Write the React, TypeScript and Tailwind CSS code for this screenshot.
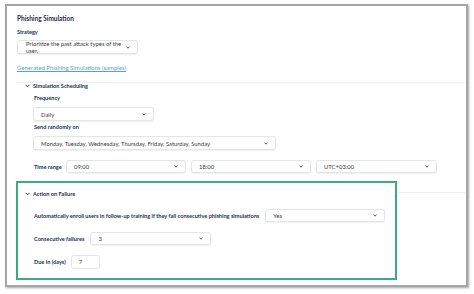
import React from "react";

const font = { fontFamily: "Lato, 'Noto Sans', sans-serif" };

function Caret() {
  return (
    <svg width="4" height="3" viewBox="0 0 4 3" className="shrink-0 text-[#444]">
      <path d="M0.5 0.6L2 2.2L3.5 0.6" fill="none" stroke="currentColor" strokeWidth="0.9" />
    </svg>
  );
}

function SectionChevron() {
  return (
    <svg width="5" height="4" viewBox="0 0 5 4" className="shrink-0 text-[#2a3354]">
      <path d="M0.6 0.8L2.5 2.8L4.4 0.8" fill="none" stroke="currentColor" strokeWidth="0.9" />
    </svg>
  );
}

function Select({
  value,
  className,
}: {
  value: React.ReactNode;
  className: string;
}) {
  return (
    <div
      className={`flex items-center justify-between pl-[7px] pr-[7px] border border-[#e3e5ea] rounded-[3px] bg-white shadow-[0_0.5px_1px_rgba(0,0,0,0.06)] text-[5.9px] text-[#3b3b3b] ${className}`}
    >
      <span className="leading-[7px]">{value}</span>
      <Caret />
    </div>
  );
}

function Label({ children, className = "" }: { children: React.ReactNode; className?: string }) {
  return (
    <div className={`text-[5.6px] leading-[6px] font-bold text-[#243057] whitespace-nowrap ${className}`}>
      {children}
    </div>
  );
}

export default function App() {
  return (
    <div className="w-[474px] h-[294px] bg-white overflow-hidden" style={font}>
      <div className="ml-[5px] mt-[4px] w-[463px] h-[283px] border-2 border-[#a6a6a6] shadow-[1px_1px_2px_rgba(0,0,0,0.35)] bg-white">
        <div className="pl-[10px] pr-[1px] pt-[9px] flex flex-col">
          {/* Title */}
          <div className="text-[6.5px] leading-[8px] font-bold text-[#1f2a52]">Phishing Simulation</div>
          <Label className="mt-[6px]">Strategy</Label>
          <Select
            className="mt-[5px] w-[121px] h-[14px] pl-[8px]"
            value={
              <>
                Prioritize the past attack types of the
                <br />
                user.
              </>
            }
          />
          <a className="mt-[11px] text-[6px] leading-[6px] text-[#5b9fcf] underline w-fit">
            Generated Phishing Simulations (samples)
          </a>

          {/* Simulation Scheduling */}
          <div className="mt-[11px] border-t border-[#eef0f3]">
            <div className="flex items-center gap-[3px] pl-[8px] h-[5px]">
              <SectionChevron />
              <span className="text-[5.6px] leading-[5px] font-bold text-[#243057]">Simulation Scheduling</span>
            </div>
            <div className="pl-[16px] flex flex-col">
              <Label className="mt-[7px] pl-[1px]">Frequency</Label>
              <Select className="mt-[6px] w-[121px] h-[14px]" value="Daily" />
              <Label className="mt-[3px] pl-[1px]">Send randomly on</Label>
              <Select
                className="mt-[6px] w-[243px] h-[14px]"
                value="Monday, Tuesday, Wednesday, Thursday, Friday, Saturday, Sunday"
              />
              <div className="mt-[10px] flex items-center h-[13px] pl-[1px]">
                <Label className="w-[32px]">Time range</Label>
                <div className="flex gap-[5px]">
                  <Select className="w-[120px] h-[13px]" value="09:00" />
                  <Select className="w-[120px] h-[13px]" value="18:00" />
                  <Select className="w-[121px] h-[13px]" value="UTC+03:00" />
                </div>
              </div>
            </div>
          </div>

          {/* Action on Failure */}
          <div className="mt-[8px] -ml-[1px] flex">
            <div className="w-[381px] h-[99px] border-2 border-[#3dab82] flex flex-col">
              <div className="flex items-center gap-[3px] pl-[7px] pt-[8px] h-[13px]">
                <SectionChevron />
                <span className="text-[5.6px] leading-[5px] font-bold text-[#243057]">Action on Failure</span>
              </div>
              <div className="pl-[16px] flex flex-col">
                <div className="mt-[13px] flex items-center gap-[6px] h-[13px]">
                  <Label>
                    Automatically enroll users in follow-up training if they fail consecutive phishing simulations
                  </Label>
                  <Select className="w-[120px] h-[13px]" value="Yes" />
                </div>
                <div className="mt-[10px] flex items-center gap-[6px] h-[13px]">
                  <Label>Consecutive failures</Label>
                  <Select className="w-[121px] h-[13px]" value="3" />
                </div>
                <div className="mt-[10px] flex items-center gap-[5px] h-[14px]">
                  <Label>Due in (days)</Label>
                  <div className="w-[29px] h-[14px] flex items-center pl-[7px] border border-[#e3e5ea] rounded-[3px] text-[5.9px] text-[#3b3b3b]">
                    7
                  </div>
                </div>
              </div>
            </div>
            <div className="flex-1 mt-[11px] h-0 border-t border-[#eef0f3]" />
          </div>
        </div>
      </div>
    </div>
  );
}
